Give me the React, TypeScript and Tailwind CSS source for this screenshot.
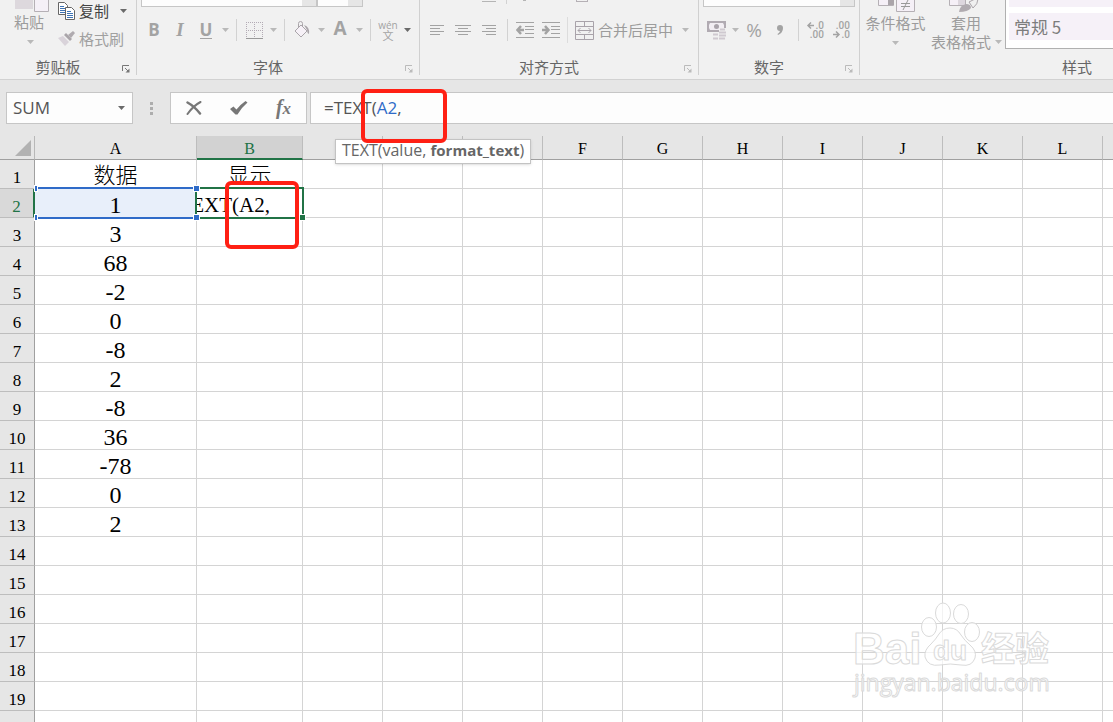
import React from 'react';
import clsx from 'clsx';

const COLUMNS = ['A', 'B', 'C', 'D', 'E', 'F', 'G', 'H', 'I', 'J', 'K', 'L', 'M'];
// letters hidden while the function hint is open, and the column past the window edge
const UNLABELLED = ['C', 'D', 'E', 'M'];
const COLUMN_A = ['数据', '1', '3', '68', '-2', '0', '-8', '2', '-8', '36', '-78', '0', '2'];
const ROWS = Array.from({ length: 20 }, (_, i) => i + 1);

function Caret({ dark }: { dark?: boolean }) {
    return (
        <svg width="7" height="4" viewBox="0 0 7 4" className={dark ? 'text-[#6a6a6a]' : 'text-[#b9b9b9]'}>
            <path d="M0 0h7L3.500 4z" fill="currentColor" />
        </svg>
    );
}

function CaretButton({ label, dark }: { label: string; dark?: boolean }) {
    return (
        <button aria-label={label} className="flex h-6 w-3 shrink-0 items-center justify-center">
            <Caret dark={dark} />
        </button>
    );
}

function ToolButton({ label, children }: { label: string; children: React.ReactNode }) {
    return (
        <button aria-label={label} className="flex h-6 w-[26px] shrink-0 items-center justify-center text-[#a3a3a3]">
            {children}
        </button>
    );
}

function Separator() {
    return (
        <div className="flex w-[10px] shrink-0 justify-center">
            <div className="h-[22px] w-px bg-[#d2d2d2]" />
        </div>
    );
}

function RibbonGroup({ title, className, launcher = 'light', children }: {
    title: string;
    className: string;
    launcher?: 'light' | 'dark' | 'none';
    children: React.ReactNode;
}) {
    return (
        <section className={clsx('h-[75px] shrink-0', className)}>
            <div className="h-14">{children}</div>
            <div className="flex h-[22px] items-center">
                <h2 className="flex-1 text-center text-[15px] leading-[22px] text-[#666]">{title}</h2>
                {launcher !== 'none' && (
                    <button aria-label={`${title}设置`} className={clsx('w-5 pt-1 pl-[6px]', launcher === 'dark' ? 'text-[#777]' : 'text-[#bbb]')}>
                        <svg width="8" height="8" viewBox="0 0 8 8" fill="none" stroke="currentColor">
                            <path d="M.5 6V.5H7M3 3l4 4" />
                            <path d="M7.500 3.500v4h-4z" fill="currentColor" stroke="none" />
                        </svg>
                    </button>
                )}
            </div>
        </section>
    );
}

// bottom edge of the combo boxes in the row above
function ComboEdge({ className }: { className: string }) {
    return (
        <div className={clsx('flex h-[7px] justify-end border-x border-b border-[#c6c6c6] bg-[#fdfdfd]', className)}>
            <div className="w-[14px] bg-[#e6e6e6]" />
        </div>
    );
}

function AlignIcon({ rows }: { rows: string }) {
    return (
        <svg width="16" height="12" viewBox="0 0 16 12" stroke="currentColor">
            <path d={rows} />
        </svg>
    );
}

function IndentIcon({ arrow }: { arrow: string }) {
    return (
        <svg width="18" height="16" viewBox="0 0 18 16" fill="none" stroke="currentColor">
            <path d="M0 .5h18M9 4.500h9M9 7.500h9M9 11.500h9M0 15.500h18" />
            <path d={arrow} strokeWidth="2.500" />
        </svg>
    );
}

function DecimalIcon({ top, bottom, arrow }: { top: string; bottom: string; arrow: 'left' | 'right' }) {
    return (
        <svg width="20" height="22" viewBox="0 0 20 22" className="overflow-visible font-['Roboto',sans-serif] text-[10px] font-medium" fill="#a3a3a3">
            <text x="18" y="10" textAnchor="end">{top}</text>
            <text x="18" y="19" textAnchor="end">{bottom}</text>
            {arrow === 'left'
                ? <path d="M2 6.500h6M5 3.500l-3 3 3 3" fill="none" stroke="#a3a3a3" strokeWidth="1.500" />
                : <path d="M1 15.500h6M4 12.500l3 3-3 3" fill="none" stroke="#a3a3a3" strokeWidth="1.500" />}
        </svg>
    );
}

function ClipboardGroup() {
    return (
        <RibbonGroup title="剪贴板" launcher="dark" className="w-[137px] border-r border-[#d0d0d0]">
            <div className="flex h-full">
                <button className="flex w-[58px] flex-col items-center text-[15px] leading-4 text-[#9c9c9c]">
                    <svg width="34" height="12" viewBox="0 0 34 12" className="mb-[2px] ml-[5px] shrink-0">
                        <path d="M0 0h18v9H0z" fill="#ddd8dd" />
                        <path d="M19.500-1h14v12.500h-14z" fill="#f5f0f7" stroke="#b5b0b5" />
                    </svg>
                    粘贴
                    <span className="mt-[10px] ml-[3px]"><Caret /></span>
                </button>
                <div>
                    <div className="flex h-[22px] items-center text-[15px] text-[#444]">
                        <button className="flex items-center gap-1">
                            <svg width="17" height="18" viewBox="0 0 17 18" fill="#fff">
                                <path d="M.5.500h6l3 3v9h-9z" stroke="#666" />
                                <path d="M2 4.500h4M2 6.500h5M2 8.500h5M2 10.500h5" stroke="#3f74b5" />
                                <path d="M7.500 5.500h6l3 3v9h-9z" stroke="#666" />
                                <path d="M9 9.500h4M9 11.500h6M9 13.500h6M9 15.500h6" stroke="#3f74b5" />
                            </svg>
                            复制
                        </button>
                        <span className="ml-2 flex"><CaretButton label="复制选项" dark /></span>
                    </div>
                    <button className="flex h-[34px] items-center gap-1 text-[15px] text-[#a0a0a0]">
                        <svg width="17" height="16" viewBox="0 0 17 16">
                            <path d="M0 7l5-2 6 6-4 4z" fill="#d9d3da" />
                            <path d="M6 4l2-2 6 6-2 2z" fill="#aaa5aa" />
                            <path d="M10 4l5-4 2 2-4 5z" fill="#b0abb0" />
                        </svg>
                        格式刷
                    </button>
                </div>
            </div>
        </RibbonGroup>
    );
}

function FontGroup() {
    return (
        <RibbonGroup title="字体" className="w-[283px] border-r border-[#d0d0d0]">
            <div className="flex pl-1">
                <ComboEdge className="w-44" />
                <ComboEdge className="w-[46px]" />
            </div>
            <div className="flex h-[46px] items-center pl-1">
                <ToolButton label="加粗"><span className="font-['Open_Sans',sans-serif] text-[17px] font-bold">B</span></ToolButton>
                <ToolButton label="倾斜"><span className="font-['Liberation_Serif',serif] text-[19px] font-bold italic">I</span></ToolButton>
                <ToolButton label="下划线"><span className="border-b border-[#a3a3a3] font-['Open_Sans',sans-serif] text-[17px] leading-4 font-bold">U</span></ToolButton>
                <CaretButton label="下划线选项" />
                <Separator />
                <ToolButton label="边框">
                    <svg width="17" height="17" viewBox="0 0 17 17" fill="none" stroke="#b3abb5">
                        <path d="M0 .5h17M.5 0v16M8.500 0v16M16.500 0v16M0 8.500h17" strokeDasharray="1 1" />
                        <path d="M0 16.500h17" stroke="#999" />
                    </svg>
                </ToolButton>
                <CaretButton label="边框选项" />
                <Separator />
                <ToolButton label="填充颜色">
                    <svg width="18" height="18" viewBox="0 0 18 18" fill="none" stroke="#aaa5aa">
                        <path d="M8 4l6 6-6 6-6-6z" fill="#f6f1f7" />
                        <path d="M5.500 7V2.500q0-2 2-2t2 2V6" />
                        <path d="M11 4q6 2 5 9-2-1-2-4z" fill="#aaa5aa" stroke="none" />
                    </svg>
                </ToolButton>
                <CaretButton label="填充颜色选项" />
                <ToolButton label="字体颜色"><span className="pb-1 font-['Open_Sans',sans-serif] text-[19px] leading-5 font-bold">A</span></ToolButton>
                <CaretButton label="字体颜色选项" />
                <Separator />
                <ToolButton label="拼音">
                    <span className="flex flex-col items-center text-[11px] leading-[10px]">
                        <span className="font-['Open_Sans',sans-serif] text-[10px]">wén</span>
                        <span>文</span>
                    </span>
                </ToolButton>
                <CaretButton label="拼音选项" dark />
            </div>
        </RibbonGroup>
    );
}

function AlignmentGroup() {
    return (
        <RibbonGroup title="对齐方式" className="w-[279px] border-r border-[#d0d0d0]">
            <div className="flex h-[7px] items-start">
                <div className="ml-[62px] h-[2px] w-[14px] border-b border-[#b5b5b5]" />
                <div className="ml-[10px] h-1 w-px bg-[#d2d2d2]" />
                <div className="ml-4 h-px w-[3px] bg-[#b5b5b5]" />
                <div className="ml-[50px] h-[2px] w-3 border-x border-b border-[#b5b0b5]" />
            </div>
            <div className="flex h-[46px] items-center pl-1">
                <ToolButton label="左对齐"><AlignIcon rows="M1 1.500h14M1 4.500h10M1 7.500h14M1 10.500h10" /></ToolButton>
                <ToolButton label="居中"><AlignIcon rows="M0 1.500h16M3 4.500h10M0 7.500h16M3 10.500h10" /></ToolButton>
                <ToolButton label="右对齐"><AlignIcon rows="M1 1.500h14M5 4.500h10M1 7.500h14M5 10.500h10" /></ToolButton>
                <Separator />
                <ToolButton label="减少缩进"><IndentIcon arrow="M8 8H1.500M5 4L1.500 8 5 12" /></ToolButton>
                <ToolButton label="增加缩进"><IndentIcon arrow="M0 8h6.500M3 4L6.500 8 3 12" /></ToolButton>
                <div className="mx-[3px] h-[26px] w-px bg-[#dcdcdc]" />
                <button className="ml-1 flex items-center gap-1 text-[15px] whitespace-nowrap text-[#9c9c9c]">
                    <svg width="19" height="19" viewBox="0 0 19 19" fill="none" stroke="#a9a3aa">
                        <path d="M.5.500h18v18H.5zM0 5.500h19M0 13.500h19M9.500 0v5M9.500 14v5" />
                        <path d="M3 9.500h13M5.500 7L3 9.500 5.500 12M13.500 7L16 9.500 13.500 12" />
                    </svg>
                    合并后居中
                </button>
                <span className="ml-[6px] flex"><CaretButton label="合并选项" /></span>
            </div>
        </RibbonGroup>
    );
}

function NumberGroup() {
    return (
        <RibbonGroup title="数字" className="w-[161px] border-r border-[#d0d0d0]">
            <div className="flex pl-1">
                <ComboEdge className="w-[152px]" />
            </div>
            <div className="flex h-[46px] items-center pl-1">
                <ToolButton label="会计数字格式">
                    <svg width="19" height="19" viewBox="0 0 19 19">
                        <path d="M0 0h19v11H0z" fill="#b1abb2" />
                        <path d="M3 2h13l1 2v3l-1 2H3L2 7V4z" fill="#f2eef3" />
                        <circle cx="9.500" cy="5.500" r="2.500" fill="#aaa4ab" />
                        <path d="M12 7h7v12h-7z" fill="#f0f0f0" />
                        <path d="M13 8.500h5M12 11.500h7M6 13.500h5M12 14.500h7M6 17.500h5M12 17.500h6" stroke="#cfc9d0" strokeWidth="2" />
                    </svg>
                </ToolButton>
                <CaretButton label="货币选项" />
                <ToolButton label="百分比样式"><span className="font-['Open_Sans',sans-serif] text-[19px]">%</span></ToolButton>
                <ToolButton label="千位分隔样式">
                    <svg width="6" height="10" viewBox="0 0 6 10" fill="currentColor">
                        <path d="M3 0a3 3 0 013 3q0 5-5 7l-.5-1q2-1 2.500-3A3 3 0 013 0z" />
                    </svg>
                </ToolButton>
                <Separator />
                <ToolButton label="增加小数位数"><DecimalIcon top=".0" bottom=".00" arrow="left" /></ToolButton>
                <ToolButton label="减少小数位数"><DecimalIcon top=".00" bottom=".0" arrow="right" /></ToolButton>
            </div>
        </RibbonGroup>
    );
}

function StylesGroup() {
    return (
        <RibbonGroup title="样式" launcher="none" className="w-[434px]">
            <div className="flex text-[15px] text-[#9c9c9c]">
                <button className="flex h-14 w-[71px] flex-col items-center leading-5">
                    <svg width="38" height="12" viewBox="0 0 38 12" className="mb-px shrink-0">
                        <path d="M1.500-1h15v6.500h-15z" fill="#f5f0f7" stroke="#b5b0b5" />
                        <path d="M11 0h6v5h-6z" fill="#aaa5aa" />
                        <path d="M19.500-1h18v12.500h-18z" fill="#f5f0f7" stroke="#b5b0b5" />
                        <path d="M24 3.500h9M24 6.500h9M31 0l-5 10" stroke="#999" fill="none" />
                    </svg>
                    条件格式
                    <span className="mt-2 flex"><Caret /></span>
                </button>
                <button className="flex h-14 flex-col leading-5">
                    <svg width="30" height="12" viewBox="0 0 30 12" className="mb-px ml-[18px] shrink-0">
                        <path d="M.5-1h16v6.500h-16z" fill="#f5f0f7" stroke="#b5b0b5" />
                        <path d="M9 0h7v5H9z" fill="#ddd7de" />
                        <path d="M10 12q1-7 7-8 5 0 5 4-3 4-12 4z" fill="#b0abb0" />
                        <path d="M20 2l6-3h3q0 5-5 9z" fill="#f0f0f0" stroke="#aaa5aa" />
                    </svg>
                    <span className="w-[70px] text-center">套用</span>
                    <span className="flex h-[18px] items-center gap-1 leading-[18px]">表格格式<Caret /></span>
                </button>
                <div className="ml-[3px] flex h-[49px] flex-1 flex-col gap-[6px] border-b border-l border-[#b0b0b0] bg-white pl-[3px]">
                    <div className="h-[7px] bg-[#f6f1f8]" />
                    <button className="h-[27px] bg-[#f6f1f8] pl-[5px] text-left text-[17px] leading-[26px] text-[#7d7d7d]">常规 5</button>
                </div>
            </div>
        </RibbonGroup>
    );
}

function FormulaBar() {
    return (
        <div className="flex h-14 items-center bg-[#e6e6e6] pl-[6px] font-['Open_Sans',sans-serif] text-[17px]">
            <div className="flex h-8 w-[127px] items-center border border-[#c6c6c6] bg-[#fdfdfd] pr-[5px] pl-[6px]">
                <input aria-label="名称框" defaultValue="SUM" className="h-7 min-w-0 flex-1 bg-transparent pb-[2px] text-[#555] outline-none" />
                <CaretButton label="名称列表" dark />
            </div>
            <div className="flex w-[37px] flex-col items-center gap-[2px]">
                <div className="size-[3px] bg-[#adadad]" />
                <div className="size-[3px] bg-[#adadad]" />
                <div className="size-[3px] bg-[#adadad]" />
            </div>
            <div className="flex h-8 w-[137px] border border-[#c6c6c6] bg-[#fdfdfd] text-[#777]">
                <button aria-label="取消" className="flex flex-1 items-center justify-center">
                    <svg width="16" height="14" viewBox="0 0 16 14" fill="none" stroke="currentColor" strokeLinecap="round">
                        <path d="M1.500 1.500Q8 5 14 12.500" strokeWidth="2.500" />
                        <path d="M14.500 1Q7 5 1.500 13" strokeWidth="2" />
                    </svg>
                </button>
                <button aria-label="输入" className="flex flex-1 items-center justify-center">
                    <svg width="18" height="14" viewBox="0 0 18 14" fill="currentColor">
                        <path d="M0 8L3.500 5.500 6.500 8.500Q11 3 15.500 0L17.500 1.500Q11 7 7.500 13.500H5.500z" />
                    </svg>
                </button>
                <button aria-label="插入函数" className="flex-1 font-['Liberation_Serif',serif] text-[20px] leading-7 font-bold italic">
                    f<span className="text-[17px]">x</span>
                </button>
            </div>
            <div
                role="textbox"
                aria-label="编辑栏"
                contentEditable
                suppressContentEditableWarning
                className="ml-[3px] h-8 flex-1 border border-r-0 border-[#c6c6c6] bg-[#fdfdfd] pl-[13px] leading-[30px] text-[#555] outline-none"
            >
                =TEXT(<span className="text-[#2f6bc8]">A2</span>,
            </div>
        </div>
    );
}

function ReferenceFrame() {
    return (
        <span className="pointer-events-none absolute -top-[2px] -right-px -bottom-[2px] left-0 z-20 border-y-2 border-[#2f6bc8]">
            <span className="absolute -top-[3px] left-0 h-[5px] w-[2px] bg-[#2f6bc8] outline outline-white" />
            <span className="absolute -bottom-[3px] left-0 h-[5px] w-[2px] bg-[#2f6bc8] outline outline-white" />
            <span className="absolute -top-[3px] -right-[2px] size-[5px] bg-[#2f6bc8] outline outline-white" />
            <span className="absolute -right-[2px] -bottom-[3px] size-[5px] bg-[#2f6bc8] outline outline-white" />
        </span>
    );
}

function CellEditor() {
    return (
        <>
            <div className="flex justify-end overflow-hidden">
                <input
                    aria-label="B2"
                    defaultValue="=TEXT(A2,"
                    className="h-6 w-36 shrink-0 bg-transparent pr-8 text-right text-[21px] outline-none"
                />
            </div>
            <span className="pointer-events-none absolute -inset-[2px] z-10 border-2 border-[#217346]">
                <span className="absolute -right-[3px] -bottom-[3px] size-[5px] bg-[#217346] outline outline-white" />
            </span>
        </>
    );
}

function Sheet() {
    return (
        <table className="w-[1183px] table-fixed border-separate border-spacing-0 font-['Liberation_Serif','Noto_Sans_CJK_SC',serif] text-black">
            <colgroup>
                <col className="w-[35px]" />
                <col className="w-[162px]" />
                <col className="w-[106px]" />
                {COLUMNS.slice(2).map(c => <col key={c} className="w-20" />)}
            </colgroup>
            <thead>
                <tr className="h-6 bg-[#e6e6e6]">
                    <td className="border-r border-b border-[#a0a0a0] border-r-[#b8b8b8] p-0">
                        <svg width="16" height="16" viewBox="0 0 16 16" className="ml-[15px]">
                            <path d="M16 0v16H0z" fill="#b2b2b2" />
                        </svg>
                    </td>
                    {COLUMNS.map(c => (
                        <th
                            key={c}
                            scope="col"
                            aria-label={c}
                            className={clsx(
                                'border-r border-r-[#bdbdbd] p-0 text-[16px] font-normal',
                                c === 'B'
                                    ? 'border-b-2 border-b-[#217346] bg-[#d2d2d2] pt-1 leading-[18px] text-[#217346]'
                                    : 'border-b border-b-[#a0a0a0] pt-[3px] leading-5',
                            )}
                        >
                            {!UNLABELLED.includes(c) && c}
                        </th>
                    ))}
                </tr>
            </thead>
            <tbody>
                {ROWS.map(row => (
                    <tr key={row} className="h-[29px]">
                        <th
                            scope="row"
                            className={clsx(
                                'border-b border-b-[#bdbdbd] p-0 pt-2 text-center text-[17px] leading-5 font-normal',
                                row === 2
                                    ? 'border-r-2 border-r-[#217346] bg-[#d9d9d9] text-[#217346]'
                                    : 'border-r border-r-[#a0a0a0] bg-[#e6e6e6]',
                            )}
                        >
                            {row}
                        </th>
                        {COLUMNS.map(c => (
                            <td
                                key={c}
                                className={clsx(
                                    'relative border-r border-b border-[#d4d4d4] p-0 pt-1 text-center leading-6',
                                    row === 1 ? 'text-[22px] font-light' : 'text-[24px]',
                                    row === 2 && c === 'A' && 'bg-[#e8effa]',
                                )}
                            >
                                {c === 'A' && COLUMN_A[row - 1]}
                                {c === 'B' && row === 1 && '显示'}
                                {c === 'A' && row === 2 && <ReferenceFrame />}
                                {c === 'B' && row === 2 && <CellEditor />}
                            </td>
                        ))}
                    </tr>
                ))}
            </tbody>
        </table>
    );
}

function Watermark() {
    return (
        <svg
            width="206"
            height="104"
            viewBox="0 0 206 104"
            className="pointer-events-none absolute top-[598px] left-[850px] z-20"
            fill="#fff"
            fillOpacity="0.700"
            stroke="#dadada"
            strokeLinejoin="round"
        >
            <ellipse cx="79" cy="29" rx="7.500" ry="9.500" />
            <ellipse cx="93" cy="15" rx="7.500" ry="10" />
            <ellipse cx="111" cy="16" rx="7.500" ry="9.500" />
            <ellipse cx="122" cy="34" rx="7.500" ry="9.500" />
            <path d="M100 30q7 0 11 7 4 6 9 10 7 6 5 13-3 9-14 7-11-2-21 0-12 2-15-8-1-7 6-13 5-5 8-10 4-6 11-6z" />
            <g className="font-['Liberation_Sans',sans-serif] font-bold">
                <text x="3" y="66" fontSize="44">Bai</text>
                <text x="83" y="62" fontSize="28">du</text>
            </g>
            <text x="131" y="63" fontSize="34" className="font-['Noto_Sans_CJK_SC',sans-serif] font-bold">经验</text>
            <text x="4" y="93" fontSize="23" className="font-['Open_Sans',sans-serif] font-medium">jingyan.baidu.com</text>
        </svg>
    );
}

export default function App() {
    return (
        <div className="relative h-screen overflow-hidden bg-white font-['Noto_Sans_CJK_SC',sans-serif]">
            <header className="flex h-20 overflow-hidden border-b border-[#d2d2d2] bg-[#f1f1f1]">
                <ClipboardGroup />
                <FontGroup />
                <AlignmentGroup />
                <NumberGroup />
                <StylesGroup />
            </header>
            <FormulaBar />
            <Sheet />

            <div role="tooltip" className="absolute top-[139px] left-[335px] z-20 h-[25px] border border-[#c3c3c3] bg-white px-[6px] font-['Open_Sans',sans-serif] text-[16px] leading-5 whitespace-nowrap text-[#666] shadow">
                TEXT(value, <b className="text-[15px] font-bold">format_text</b>)
            </div>
            <div className="pointer-events-none absolute top-[89px] left-[361px] z-30 h-[54px] w-[86px] rounded-md border-4 border-[#ff2014]" />
            <div className="pointer-events-none absolute top-[181px] left-[225px] z-30 h-[68px] w-[74px] rounded-md border-4 border-[#ff2014]" />
            <Watermark />
        </div>
    );
}
